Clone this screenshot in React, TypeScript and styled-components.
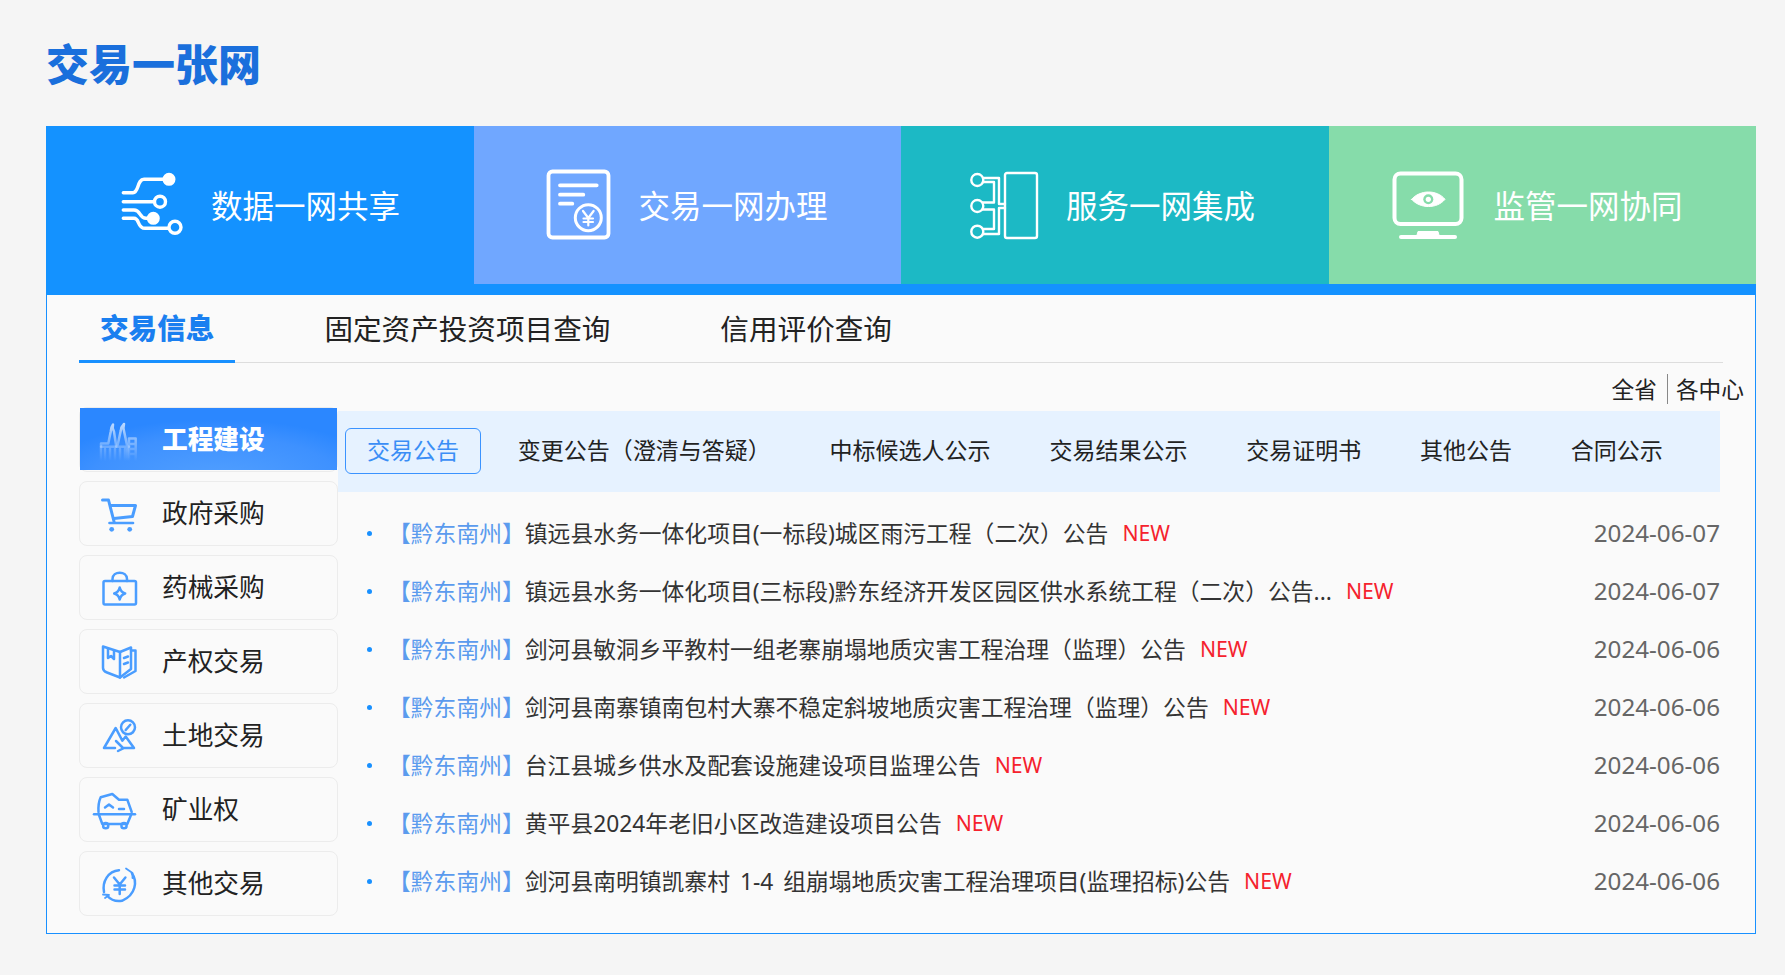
import React from "react";
import styled, { createGlobalStyle } from "styled-components";

const Global = createGlobalStyle`
  html, body { margin: 0; padding: 0; background: #f5f5f5; }
  body { font-family: "Noto Sans CJK SC", "Noto Sans", sans-serif; color: #222; }
  * { box-sizing: border-box; }
`;

const Page = styled.div`
  width: 1785px;
  height: 975px;
  padding-left: 46px;
  overflow: hidden;
`;
const Header = styled.header`
  height: 126px;
  display: flex;
  align-items: center;
  padding-bottom: 2px;
`;
const Title = styled.h1`
  margin: 0;
  font-size: 43px;
  line-height: 1;
  font-weight: 900;
  color: #1a6fdc;
`;
const Panel = styled.section`
  width: 1710px;
  height: 808px;
  background: #fafafa;
  border: 1px solid #1890ff;
  border-top: 0;
`;
const TileRow = styled.div`
  display: flex;
  margin: 0 -1px;
  border-bottom: 11px solid #1492ff;
`;
const Tile = styled.div<{ $bg: string }>`
  flex: 1;
  height: 158px;
  padding-left: 67px;
  display: flex;
  align-items: center;
  gap: 26px;
  background: ${(p) => p.$bg};
  color: #fff;
  font-size: 31.5px;
`;
const TileText = styled.span`
  padding-bottom: 2px;
`;
const TileIcon = styled.svg`
  width: 72px;
  height: 72px;
  flex: none;
  overflow: visible;
  fill: none;
  stroke: #fff;
  stroke-linecap: round;
  stroke-linejoin: round;
`;
const TabRow = styled.nav`
  margin: 0 32px;
  height: 68px;
  display: flex;
  gap: 68px;
  border-bottom: 1px solid #ddd;
`;
const Tab = styled.div<{ $active?: boolean }>`
  height: 68px;
  padding: 0 21px ${(p) => (p.$active ? "3px" : "0")};
  display: flex;
  align-items: center;
  font-size: 28.6px;
  font-weight: ${(p) => (p.$active ? 900 : 400)};
  color: ${(p) => (p.$active ? "#1a7ff0" : "#222")};
  border-bottom: 3px solid ${(p) => (p.$active ? "#1890ff" : "transparent")};
  margin-bottom: -1px;
`;
const ScopeRow = styled.div`
  height: 43.5px;
  padding: 11px 11px 2.5px 0;
  display: flex;
  justify-content: flex-end;
  font-size: 22.7px;
  line-height: 29px;
  color: #222;
`;
const Scope = styled.span<{ $divided?: boolean }>`
  padding-left: ${(p) => (p.$divided ? "8px" : "0")};
  padding-right: ${(p) => (p.$divided ? "0" : "10px")};
  border-left: ${(p) => (p.$divided ? "1px solid #888" : "0")};
`;
const Body = styled.div`
  display: flex;
  padding-left: 32px;
`;
const Side = styled.aside`
  width: 259px;
  flex: none;
  display: flex;
  flex-direction: column;
  gap: 9px;
`;
const SideItem = styled.div<{ $active?: boolean }>`
  position: relative;
  height: 65px;
  padding-left: 20px;
  display: flex;
  align-items: center;
  gap: 22px;
  border: 1px solid #ececec;
  border-radius: 8px;
  font-size: 25.7px;
  font-weight: ${(p) => (p.$active ? 900 : 400)};
  color: ${(p) => (p.$active ? "#fff" : "#222")};
  &::before {
    content: "";
    display: ${(p) => (p.$active ? "block" : "none")};
    position: absolute;
    top: 0;
    left: 0;
    right: 0;
    bottom: 1px;
    background:
      radial-gradient(ellipse 175px 62px at 53% 118%, #52a0ff 0%, #3e91ff 72%, rgba(43, 135, 255, 0) 100%),
      #2b87ff;
  }
`;
const SideLabel = styled.span`
  position: relative;
  padding-bottom: 3px;
`;
const SideIcon = styled.svg`
  position: relative;
  width: 40px;
  height: 40px;
  flex: none;
  overflow: visible;
  fill: none;
  stroke: #4a9dff;
  stroke-width: 2.5;
  stroke-linecap: round;
  stroke-linejoin: round;
`;
const Content = styled.div`
  width: 1382px;
  padding-top: 4px;
`;
const SubBar = styled.div`
  height: 81px;
  padding-left: 7px;
  display: flex;
  align-items: center;
  gap: 14.8px;
  background: #e6f2ff;
  font-size: 23px;
`;
const SubTab = styled.div<{ $active?: boolean }>`
  height: 46px;
  padding: 0 21px 4px;
  display: flex;
  align-items: center;
  white-space: nowrap;
  border: 1px solid ${(p) => (p.$active ? "#3a93ff" : "transparent")};
  border-radius: 6px;
  color: ${(p) => (p.$active ? "#3a8ef6" : "#222")};
`;
const List = styled.ul`
  list-style: none;
  margin: 13px 0 0;
  padding: 0;
`;
const Row = styled.li`
  height: 58px;
  padding: 0 0 2px 29px;
  display: flex;
  align-items: center;
  font-family: "Noto Sans", "Noto Sans CJK SC", sans-serif;
  font-size: 22.8px;
  word-spacing: 4px;
  color: #333;
  white-space: nowrap;
`;
const Dot = styled.i`
  width: 5px;
  height: 5px;
  margin: 2px 16px 0 0;
  border-radius: 50%;
  background: #1890ff;
`;
const Region = styled.span`
  color: #5b9bee;
`;
const New = styled.span`
  margin-left: 14px;
  font-size: 21.2px;
  color: #f5222d;
`;
const DateText = styled.span`
  margin-left: auto;
  font-size: 24.2px;
  color: #666;
`;

const DataIcon = () => (
  <TileIcon viewBox="0 0 72 72" strokeWidth={3.4}>
    <path d="M10.3 23.7H20C26 23.7 24 10.3 31 10.3H54" />
    <circle cx="56" cy="10.3" r="4.8" fill="#fff" />
    <path d="M10.3 32.7H41" />
    <circle cx="47" cy="32.7" r="5.5" />
    <path d="M10.3 41H21C28 41 26 49.3 33 49.3H38" />
    <circle cx="40.3" cy="49.3" r="4.8" fill="#fff" />
    <path d="M10.3 49.3H21C27 49.3 24 59.3 32 59.3H55" />
    <circle cx="62" cy="58.3" r="6" />
  </TileIcon>
);
const DealIcon = () => (
  <TileIcon viewBox="0 0 72 72" strokeWidth={3.8}>
    <rect x="7.5" y="2.5" width="60" height="66" rx="4" />
    <path d="M19 16.3H55.7M19 25.7H42.3M19 34.7H31.3" />
    <circle cx="47.3" cy="48.7" r="13" strokeWidth={3} />
    <path d="M42 42L47.3 49L52.6 42M47.3 49V56.5M42.5 49.5H52M42.5 53H52" strokeWidth={2.2} />
  </TileIcon>
);
const ServiceIcon = () => (
  <TileIcon viewBox="0 0 72 72" strokeWidth={2.4}>
    <rect x="37" y="4" width="32" height="65" rx="2" />
    <circle cx="9.3" cy="11" r="6" />
    <circle cx="9.3" cy="37" r="6" />
    <circle cx="9.3" cy="62.7" r="6" />
    <path d="M15 9H31V35H37M15 13H26V33.5H15M15 40.5H26V60H15M15 65H31V39H37" />
  </TileIcon>
);
const WatchIcon = () => (
  <TileIcon viewBox="0 0 72 72" strokeWidth={4}>
    <rect x="-1.5" y="4.5" width="67" height="50.5" rx="6" />
    <path d="M15.6 30.3C24 20.5 41 20.5 49 30.3C41 40 24 40 15.6 30.3Z" fill="#fff" strokeWidth={1} />
    <circle cx="32.3" cy="30.3" r="5" fill="#86dcaa" stroke="none" />
    <circle cx="32.3" cy="30.3" r="2.6" fill="#fff" stroke="none" />
    <path d="M21 66L22 62.5H42L43 66Z" fill="#fff" strokeWidth={1} />
    <path d="M5 68H59" />
  </TileIcon>
);

const BuildIcon = () => (
  <SideIcon viewBox="0 0 40 40" style={{ stroke: "url(#fadeWhite)" }} strokeWidth={1.3}>
    <defs>
      <linearGradient id="fadeWhite" gradientUnits="userSpaceOnUse" x1="0" y1="4" x2="0" y2="42">
        <stop offset="0%" stopColor="#fff" stopOpacity={0.7} />
        <stop offset="100%" stopColor="#fff" stopOpacity={0} />
      </linearGradient>
    </defs>
    <path d="M1 41V24.5H8.3L10.7 12.7Q11 8 13 5.5Q12 9 14 12.7L16.3 27.7" />
    <path d="M17.3 27.7L20.7 12Q21 8 24 5Q23 9 24 12L27.3 27.7V41M1 27.7H29" />
    <path d="M29 41V19.5H35.7V41M5 30V41M10 30V41M15 30V41M20 30V41M25 30V41M31 25H34M31 30H34M31 35H34" />
  </SideIcon>
);
const CartIcon = () => (
  <SideIcon viewBox="0 0 40 40">
    <path d="M2.5 7H8.5L14 28.5" strokeWidth={3} />
    <path d="M11 12.5H35.5L32.5 23.5L14 25.5" strokeWidth={3} />
    <path d="M9.5 30H33" strokeWidth={2.6} />
    <circle cx="11.7" cy="36.3" r="2.4" fill="#4a9dff" stroke="none" />
    <circle cx="29.7" cy="36.3" r="2.4" fill="#4a9dff" stroke="none" />
  </SideIcon>
);
const BagIcon = () => (
  <SideIcon viewBox="0 0 40 40" strokeWidth={2}>
    <rect x="3.5" y="14" width="32.5" height="23.5" rx="1.5" />
    <path d="M12.5 14V12C12.5 3.5 27 3.5 27 12V14" />
    <path d="M19.7 20.5C20.5 24 22 25.6 25.2 26.5C22 27.4 20.5 29 19.7 32.5C19 29 17.4 27.4 14.2 26.5C17.4 25.6 19 24 19.7 20.5Z" />
  </SideIcon>
);
const BookIcon = () => (
  <SideIcon viewBox="0 0 40 40">
    <path d="M3 5.5L20 11V36.5L7 31.5Q3 30 3 27Z" />
    <path d="M20 11L31 6.5V28L20 36.5" />
    <path d="M31 9.5H35.5V30L24 36.5" />
    <path d="M8 8V17L11 15L14 18V9.5" />
    <path d="M24 17L28 15.5M24 23L28 21.5" />
  </SideIcon>
);
const LandIcon = () => (
  <SideIcon viewBox="0 0 40 40">
    <circle cx="28" cy="12.3" r="7" />
    <path d="M25.7 15L30.3 9.7" />
    <path d="M15 33H4L15.7 13L22.3 25.7L25.7 21.5L34 33H24L18 36" />
    <path d="M16 26L23 33" />
  </SideIcon>
);
const MineIcon = () => (
  <SideIcon viewBox="0 0 40 40" strokeWidth={2.8}>
    <path d="M-6 25.3H35" />
    <path d="M-1.5 23Q-2 14 .7 8.3L12.3 5L19 10.7H27.3L31.7 23" />
    <path d="M5 18.5L9 15.5L13 18.5" />
    <path d="M19 20H24" />
    <path d="M-1 26L2.3 35H27.3L31 26" />
    <circle cx="5.7" cy="36.7" r="2.6" />
    <circle cx="24" cy="36.7" r="2.6" />
  </SideIcon>
);
const YenIcon = () => (
  <SideIcon viewBox="0 0 40 40" strokeWidth={2.6}>
    <path d="M4 29C2 19 8 8 19 7.2" />
    <path d="M32 10.5C37.5 18 36 32 22 37.8C15 38.8 10 36 7.5 33" />
    <path d="M26 5.5L32.5 10L32.5 15" strokeWidth={1.8} />
    <path d="M3 31.5L9 32L5 35" strokeWidth={1.8} />
    <path d="M14 14.5L19.7 21.5L25.4 14.5M19.7 21.5V31M14.5 22.5H25M14.5 26.5H25" />
  </SideIcon>
);

const tiles = [
  { label: "数据一网共享", bg: "#1492ff", Icon: DataIcon },
  { label: "交易一网办理", bg: "#70a7ff", Icon: DealIcon },
  { label: "服务一网集成", bg: "#1cb9c5", Icon: ServiceIcon },
  { label: "监管一网协同", bg: "#86dcaa", Icon: WatchIcon },
];
const side = [
  { label: "工程建设", Icon: BuildIcon, active: true },
  { label: "政府采购", Icon: CartIcon },
  { label: "药械采购", Icon: BagIcon },
  { label: "产权交易", Icon: BookIcon },
  { label: "土地交易", Icon: LandIcon },
  { label: "矿业权", Icon: MineIcon },
  { label: "其他交易", Icon: YenIcon },
];
const subs = ["交易公告", "变更公告（澄清与答疑）", "中标候选人公示", "交易结果公示", "交易证明书", "其他公告", "合同公示"];
const rows = [
  ["镇远县水务一体化项目(一标段)城区雨污工程（二次）公告", "2024-06-07"],
  ["镇远县水务一体化项目(三标段)黔东经济开发区园区供水系统工程（二次）公告...", "2024-06-07"],
  ["剑河县敏洞乡平教村一组老寨崩塌地质灾害工程治理（监理）公告", "2024-06-06"],
  ["剑河县南寨镇南包村大寨不稳定斜坡地质灾害工程治理（监理）公告", "2024-06-06"],
  ["台江县城乡供水及配套设施建设项目监理公告", "2024-06-06"],
  ["黄平县2024年老旧小区改造建设项目公告", "2024-06-06"],
  ["剑河县南明镇凯寨村 1-4 组崩塌地质灾害工程治理项目(监理招标)公告", "2024-06-06"],
];

export default function App() {
  return (
    <Page>
      <Global />
      <Header>
        <Title>交易一张网</Title>
      </Header>
      <Panel>
        <TileRow>
          {tiles.map(({ label, bg, Icon }) => (
            <Tile key={label} $bg={bg}>
              <Icon />
              <TileText>{label}</TileText>
            </Tile>
          ))}
        </TileRow>
        <TabRow>
          <Tab $active>交易信息</Tab>
          <Tab>固定资产投资项目查询</Tab>
          <Tab>信用评价查询</Tab>
        </TabRow>
        <ScopeRow>
          <Scope>全省</Scope>
          <Scope $divided>各中心</Scope>
        </ScopeRow>
        <Body>
          <Side>
            {side.map(({ label, Icon, active }) => (
              <SideItem key={label} $active={active}>
                <Icon />
                <SideLabel>{label}</SideLabel>
              </SideItem>
            ))}
          </Side>
          <Content>
            <SubBar>
              {subs.map((s, i) => (
                <SubTab key={s} $active={i === 0}>
                  {s}
                </SubTab>
              ))}
            </SubBar>
            <List>
              {rows.map(([t, d]) => (
                <Row key={t}>
                  <Dot />
                  <Region>【黔东南州】</Region>
                  <span>{t}</span>
                  <New>NEW</New>
                  <DateText>{d}</DateText>
                </Row>
              ))}
            </List>
          </Content>
        </Body>
      </Panel>
    </Page>
  );
}
